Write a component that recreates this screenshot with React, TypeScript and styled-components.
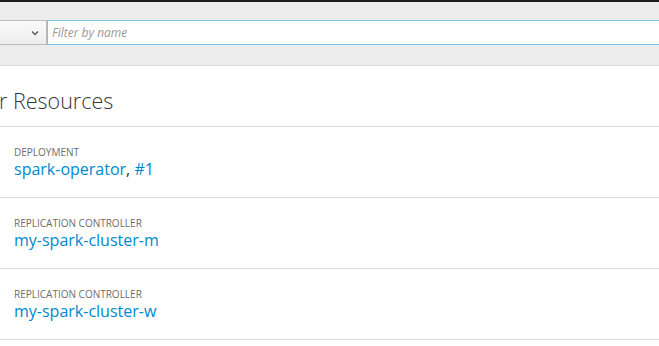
import React from "react";
import styled, { createGlobalStyle } from "styled-components";

const Global = createGlobalStyle`
  html, body { margin: 0; padding: 0; background: #fff; }
  body { font-family: "Open Sans", "Liberation Sans", sans-serif; overflow: hidden; }
  * { box-sizing: border-box; }
`;

const Page = styled.div`
  width: 659px;
  height: 346px;
  overflow: hidden;
  display: flex;
  flex-direction: column;
`;

const TopStrip = styled.div`
  height: 2px;
  background: #1e1e1e;
  flex: none;
`;

const Toolbar = styled.div`
  background: #ededed;
  border-bottom: 1px solid #dcdcdc;
  padding: 18px 0 20px 0;
  display: flex;
  flex: none;
`;

const Select = styled.div`
  width: 47px;
  height: 25px;
  border: 1px solid #bbb;
  border-left: none;
  background: linear-gradient(#fafafa, #ededed);
  display: flex;
  align-items: center;
  justify-content: flex-end;
  padding-right: 7px;
  flex: none;
`;

const FilterInput = styled.div`
  flex: 1;
  height: 25px;
  background: #fff;
  border: 1px solid #7dc3e8;
  border-right: none;
  display: flex;
  align-items: center;
  padding-left: 4px;
  font-size: 12px;
  font-style: italic;
  color: #999;
`;

const Heading = styled.h2`
  margin: 0 0 0 -1px;
  padding: 22px 0 12px 0;
  font-size: 21.5px;
  font-weight: 300;
  color: #363636;
  line-height: 26px;
  border-bottom: 1px solid #dcdcdc;
`;

const Row = styled.div`
  padding: 19px 14px;
  border-bottom: 1px solid #dcdcdc;
  height: 71px;
  display: flex;
  flex-direction: column;
`;

const Kind = styled.div`
  font-size: 10px;
  line-height: 13px;
  text-transform: uppercase;
  color: #6d6d6d;
`;

const Name = styled.div`
  font-size: 16px;
  line-height: 20px;
  color: #363636;
`;

const Link = styled.span`
  color: #0088ce;
`;

const rows = [
  { kind: "Deployment", name: "spark-operator", suffix: "#1" },
  { kind: "Replication Controller", name: "my-spark-cluster-m" },
  { kind: "Replication Controller", name: "my-spark-cluster-w" },
];

export default function App() {
  return (
    <Page>
      <Global />
      <TopStrip />
      <Toolbar>
        <Select>
          <svg width="8" height="6" viewBox="0 0 8 6">
            <path d="M1 1.5 L4 4.5 L7 1.5" fill="none" stroke="#555" strokeWidth="1.3" />
          </svg>
        </Select>
        <FilterInput>Filter by name</FilterInput>
      </Toolbar>
      <Heading>r Resources</Heading>
      {rows.map((r, i) => (
        <Row key={i}>
          <Kind>{r.kind}</Kind>
          <Name>
            <Link>{r.name}</Link>
            {r.suffix && (
              <>
                , <Link>{r.suffix}</Link>
              </>
            )}
          </Name>
        </Row>
      ))}
    </Page>
  );
}
